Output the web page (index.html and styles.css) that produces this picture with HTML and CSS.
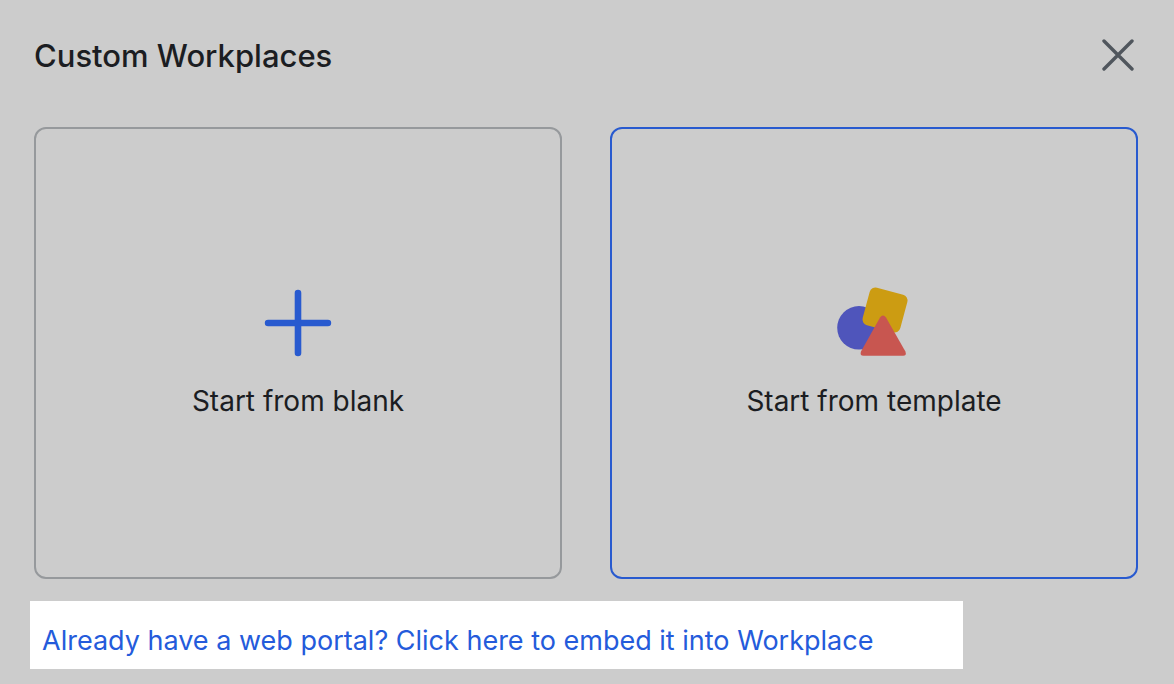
FILE: index.html
```html
<!DOCTYPE html>
<html lang="en">
<head>
    <meta charset="UTF-8">
    <meta name="viewport" content="width=device-width, initial-scale=1.0">
    <title>Custom Workplaces</title>
    <link rel="stylesheet" href="styles.css">
</head>
<body>
    <main class="dialog">
        <header class="dialog-header">
            <h1>Custom Workplaces</h1>
            <button class="close" type="button" aria-label="Close">
                <svg width="32" height="32" viewBox="0 0 32 32" fill="none" stroke="currentColor" stroke-width="3.4" stroke-linecap="round">
                    <path d="M2 2L30 30M30 2L2 30"/>
                </svg>
            </button>
        </header>

        <div class="options">
            <button class="option" type="button">
                <svg width="72" height="72" viewBox="0 0 72 72" fill="none" stroke="#285acf" stroke-width="6.6" stroke-linecap="round">
                    <path d="M36 6.100V65.900M6.100 36H65.900"/>
                </svg>
                <span>Start from blank</span>
            </button>
            <button class="option selected" type="button">
                <svg width="72" height="72" viewBox="0 0 72 72">
                    <circle cx="21" cy="40.800" r="21.800" fill="#4f55bb"/>
                    <rect x="27.500" y="3.500" width="39" height="39" rx="6" fill="#cc9c12" transform="rotate(15 47 23)"/>
                    <path d="M42 30.500Q45 26.700 48 30.500L67.400 64.500Q69 68.700 65 68.700H25.500Q21.500 68.700 23 64.500Z" fill="#c85650"/>
                </svg>
                <span>Start from template</span>
            </button>
        </div>

        <div class="embed">
            <a href="#">Already have a web portal? Click here to embed it into Workplace</a>
        </div>
    </main>
</body>
</html>
```

FILE: styles.css
```css
* {
    box-sizing: border-box;
    margin: 0;
    padding: 0;
}

body {
    min-height: 100vh;
    background: #cccccc;
    color: #1b1d22;
    font-family: Inter, sans-serif;
}

.dialog {
    padding: 31px 36px 15px 34px;
}

.dialog-header {
    display: flex;
    justify-content: space-between;
    align-items: center;
    height: 48px;
    margin-bottom: 48px;
}

h1 {
    font-size: 31px;
    font-weight: 500;
}

.close {
    display: flex;
    padding: 4px;
    border: none;
    background: none;
    color: #50565d;
    cursor: pointer;
}

.options {
    display: grid;
    grid-template-columns: 1fr 1fr;
    gap: 48px;
}

.option {
    display: flex;
    flex-direction: column;
    align-items: center;
    justify-content: center;
    gap: 24px;
    min-height: 452px;
    border: 2px solid #96999c;
    border-radius: 12px;
    background: none;
    color: inherit;
    font: 400 28px/36px Inter, sans-serif;
    cursor: pointer;
}

.option svg {
    overflow: visible;
}

.option.selected {
    border-color: #285acf;
}

.embed {
    width: fit-content;
    margin: 22px 0 0 -4px;
    padding: 22px 90px 10px 12px;
    background: #ffffff;
    font-size: 27px;
    line-height: 36px;
}

.embed a {
    color: #245bdb;
    text-decoration: none;
}
```
